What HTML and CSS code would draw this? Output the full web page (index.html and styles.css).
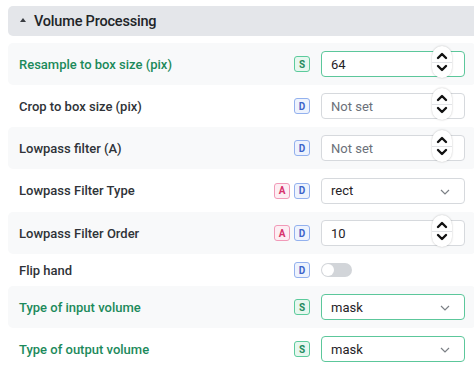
FILE: index.html
```html
<!DOCTYPE html>
<html>
<head>
<meta charset="utf-8">
<link rel="stylesheet" href="styles.css">
</head>
<body>
<div class="panel">
  <div class="header">
    <span class="caret"></span>
    <span class="title">Volume Processing</span>
  </div>

  <div class="row alt">
    <div class="label green">Resample to box size (pix)</div>
    <div class="badges"><span class="badge s">S</span></div>
    <div class="control">
      <div class="input green-border"><span class="val">64</span>
        <span class="spin"><svg width="12" height="26" viewBox="0 0 12 26"><polyline points="2,9 6,5 10,9" /><polyline points="2,17 6,21 10,17" /></svg></span>
      </div>
    </div>
  </div>

  <div class="row">
    <div class="label">Crop to box size (pix)</div>
    <div class="badges"><span class="badge d">D</span></div>
    <div class="control">
      <div class="input"><span class="ph">Not set</span>
        <span class="spin"><svg width="12" height="26" viewBox="0 0 12 26"><polyline points="2,9 6,5 10,9" /><polyline points="2,17 6,21 10,17" /></svg></span>
      </div>
    </div>
  </div>

  <div class="row alt">
    <div class="label">Lowpass filter (A)</div>
    <div class="badges"><span class="badge d">D</span></div>
    <div class="control">
      <div class="input"><span class="ph">Not set</span>
        <span class="spin"><svg width="12" height="26" viewBox="0 0 12 26"><polyline points="2,9 6,5 10,9" /><polyline points="2,17 6,21 10,17" /></svg></span>
      </div>
    </div>
  </div>

  <div class="row tall">
    <div class="label">Lowpass Filter Type</div>
    <div class="badges"><span class="badge a">A</span><span class="badge d">D</span></div>
    <div class="control">
      <div class="input select"><span class="val">rect</span>
        <svg class="chev" width="10" height="6" viewBox="0 0 10 6"><polyline points="1,1 5,5 9,1" /></svg>
      </div>
    </div>
  </div>

  <div class="row alt">
    <div class="label">Lowpass Filter Order</div>
    <div class="badges"><span class="badge a">A</span><span class="badge d">D</span></div>
    <div class="control">
      <div class="input"><span class="val">10</span>
        <span class="spin"><svg width="12" height="26" viewBox="0 0 12 26"><polyline points="2,9 6,5 10,9" /><polyline points="2,17 6,21 10,17" /></svg></span>
      </div>
    </div>
  </div>

  <div class="row short">
    <div class="label">Flip hand</div>
    <div class="badges"><span class="badge d">D</span></div>
    <div class="control">
      <span class="toggle"><span class="knob"></span></span>
    </div>
  </div>

  <div class="row alt">
    <div class="label green">Type of input volume</div>
    <div class="badges"><span class="badge s">S</span></div>
    <div class="control">
      <div class="input select green-border"><span class="val">mask</span>
        <svg class="chev" width="10" height="6" viewBox="0 0 10 6"><polyline points="1,1 5,5 9,1" /></svg>
      </div>
    </div>
  </div>

  <div class="row">
    <div class="label green">Type of output volume</div>
    <div class="badges"><span class="badge s">S</span></div>
    <div class="control">
      <div class="input select green-border"><span class="val">mask</span>
        <svg class="chev" width="10" height="6" viewBox="0 0 10 6"><polyline points="1,1 5,5 9,1" /></svg>
      </div>
    </div>
  </div>
</div>
</body>
</html>
```

FILE: styles.css
```css
html, body {
  overflow: hidden;
}
body {
  margin: 6px 0 0 8px;
  background: #ffffff;
  font-family: Roboto, "Liberation Sans", sans-serif;
  color: #2b2f33;
}
.panel {
  width: 468px;
}
.header {
  height: 30px;
  background: #e4e6ea;
  border-radius: 5px;
  display: flex;
  align-items: center;
  padding-left: 12px;
  margin-right: -12px;
  margin-bottom: 7px;
}
.caret {
  width: 0;
  height: 0;
  border-left: 3.5px solid transparent;
  border-right: 3.5px solid transparent;
  border-bottom: 4px solid #3a3d42;
  margin-right: 8px;
  margin-top: -2px;
}
.title {
  font-size: 14.5px;
  font-weight: 500;
  letter-spacing: -0.2px;
  color: #212428;
}
.row {
  display: flex;
  align-items: center;
  height: 42px;
  padding-left: 11px;
  padding-right: 11px;
  border-radius: 5px;
}
.row.alt {
  background: #f8f9fa;
}
.row.tall {
  height: 43px;
}
.row.short {
  height: 32px;
}
.label {
  flex: 1;
  font-size: 13px;
  font-weight: 500;
  color: #2f3338;
}
.label.green {
  color: #1c8a5b;
}
.badges {
  display: flex;
  gap: 4px;
}
.badge {
  box-sizing: border-box;
  width: 16px;
  height: 16px;
  border: 1px solid;
  border-radius: 3px;
  font-size: 10px;
  font-weight: 700;
  display: flex;
  align-items: center;
  justify-content: center;
}
.badge.s {
  color: #1f8a5e;
  border-color: #5ccb9c;
  background: #e7f7ef;
}
.badge.d {
  color: #3d63c9;
  border-color: #93b1ee;
  background: #eef3fd;
}
.badge.a {
  color: #d6336c;
  border-color: #f19ab8;
  background: #fdeef3;
}
.control {
  width: 144px;
  margin-left: 11px;
  display: flex;
  align-items: center;
}
.input {
  position: relative;
  box-sizing: border-box;
  width: 144px;
  height: 26px;
  border: 1px solid #d6d9dd;
  border-radius: 4px;
  background: #ffffff;
  display: flex;
  align-items: center;
  padding-left: 9px;
  font-size: 13px;
}
.input.green-border {
  border-color: #5cc79b;
}
.val {
  color: #1f2226;
}
.ph {
  color: #6b7079;
}
.spin {
  position: absolute;
  right: 12px;
  top: -6px;
  width: 20px;
  height: 32px;
  border-radius: 10px;
  background: #ffffff;
  box-shadow: 0 0 2px rgba(0,0,0,0.25);
  display: flex;
  align-items: center;
  justify-content: center;
}
.spin::after {
  content: "";
  position: absolute;
  left: 0;
  right: 0;
  top: 16px;
  border-top: 1px solid #e2e4e7;
}
.spin svg polyline {
  fill: none;
  stroke: #111;
  stroke-width: 2.4;
  stroke-linecap: round;
  stroke-linejoin: round;
}
.chev {
  position: absolute;
  right: 14px;
  top: 10px;
}
.chev polyline {
  fill: none;
  stroke: #7c8086;
  stroke-width: 1.2;
}
.toggle {
  position: relative;
  width: 31px;
  height: 14px;
  border-radius: 7px;
  background: #d2d5d9;
}
.knob {
  position: absolute;
  left: 1px;
  top: 1px;
  width: 12px;
  height: 12px;
  border-radius: 50%;
  background: #ffffff;
}
```
